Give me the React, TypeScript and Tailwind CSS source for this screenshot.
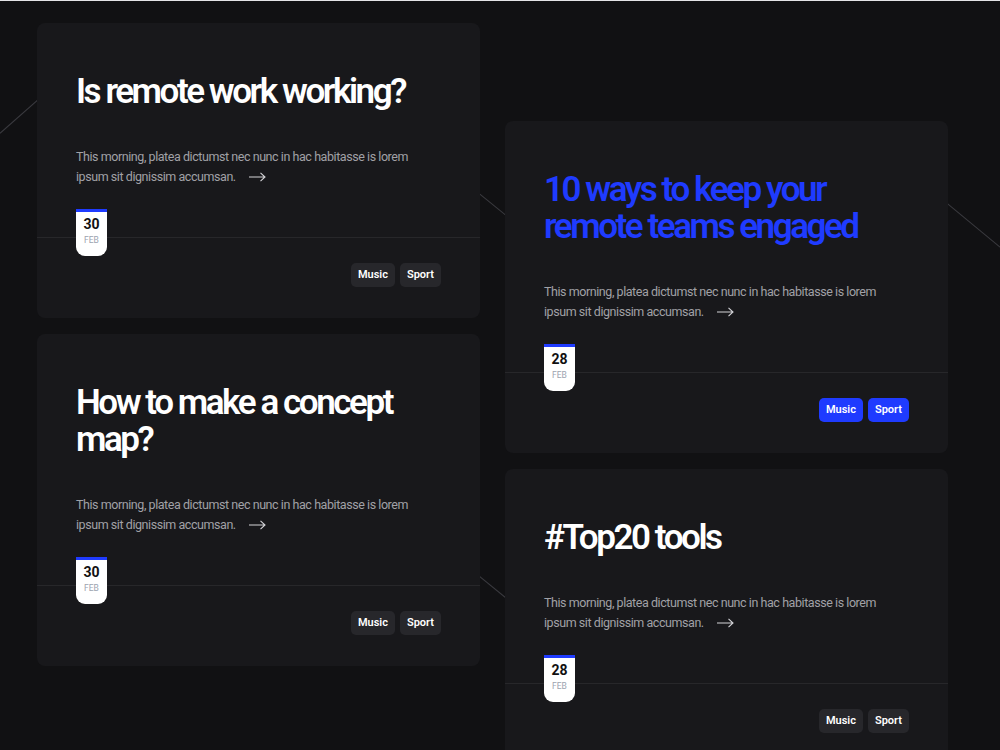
import { ReactNode } from "react";

type Post = {
  title: string;
  day: string;
  active?: boolean;
};

const leftPosts: Post[] = [
  { title: "Is remote work working?", day: "30" },
  { title: "How to make a concept map?", day: "30" },
];

const rightPosts: Post[] = [
  { title: "10 ways to keep your remote teams engaged", day: "28", active: true },
  { title: "#Top20 tools", day: "28" },
];

function Tag({ children, active }: { children: ReactNode; active?: boolean }) {
  return (
    <span
      className={`rounded-[5px] px-[7px] h-6 flex items-center text-[11px] font-semibold text-white ${
        active ? "bg-[#1f3bff]" : "bg-[#27272b]"
      }`}
    >
      {children}
    </span>
  );
}

function Arrow() {
  return (
    <svg width="17" height="10" viewBox="0 0 17 10" fill="none" className="inline-block ml-[13px] -mt-[2px]">
      <path d="M0 5h16M11.5 0.8 16 5l-4.5 4.2" stroke="#d4d4d8" strokeWidth="1.1" />
    </svg>
  );
}

function PostCard({ post }: { post: Post }) {
  return (
    <div className="relative z-10 bg-[#18181b] rounded-lg">
      <div className="px-[39px] pt-[50px]">
        <h2
          className={`max-w-[340px] text-[35px] leading-[37px] font-semibold tracking-[-0.07em] ${
            post.active ? "text-[#1f3bff]" : "text-white"
          }`}
        >
          {post.title}
        </h2>
        <p className="mt-[37px] text-[12.5px] leading-5 tracking-[-0.035em] text-[#a1a1a6]">
          This morning, platea dictumst nec nunc in hac habitasse is lorem
          <br />
          ipsum sit dignissim accumsan.
          <Arrow />
        </p>
      </div>
      <div className="mt-[50px] border-t border-[#27272a] px-[39px] pb-[31px]">
        <div className="-mt-[29px] w-[31px] h-[47px] bg-white rounded-b-[9px] border-t-[3px] border-[#1f3bff] flex flex-col items-center pt-[4px]">
          <span className="text-[14px] leading-[16px] font-bold text-[#111]">{post.day}</span>
          <span className="text-[8.5px] leading-[12px] text-[#9ca3af] mt-[2px]">FEB</span>
        </div>
        <div className="mt-[7px] flex justify-end gap-[5px]">
          <Tag active={post.active}>Music</Tag>
          <Tag active={post.active}>Sport</Tag>
        </div>
      </div>
    </div>
  );
}

export default function App() {
  return (
    <div
      className="relative min-h-screen overflow-hidden bg-[#111113] border-t border-[#e4e4e7]"
      style={{ fontFamily: "Roboto, 'Noto Sans', sans-serif" }}
    >
      <svg className="absolute inset-0 w-full h-full z-0" viewBox="0 0 1000 750" preserveAspectRatio="none">
        <g stroke="#3a3a3f" strokeWidth="1">
          <line x1="0" y1="130" x2="60" y2="78" />
          <line x1="470" y1="182" x2="515" y2="218" />
          <line x1="470" y1="558" x2="515" y2="594" />
          <line x1="935" y1="189" x2="1000" y2="242" />
        </g>
      </svg>
      <div className="relative flex gap-[25px] pl-[37px] pt-[22px]">
        <div className="w-[443px] flex flex-col gap-4">
          {leftPosts.map((p) => (
            <PostCard key={p.title} post={p} />
          ))}
        </div>
        <div className="w-[443px] flex flex-col gap-4 pt-[98px]">
          {rightPosts.map((p) => (
            <PostCard key={p.title} post={p} />
          ))}
        </div>
      </div>
    </div>
  );
}
